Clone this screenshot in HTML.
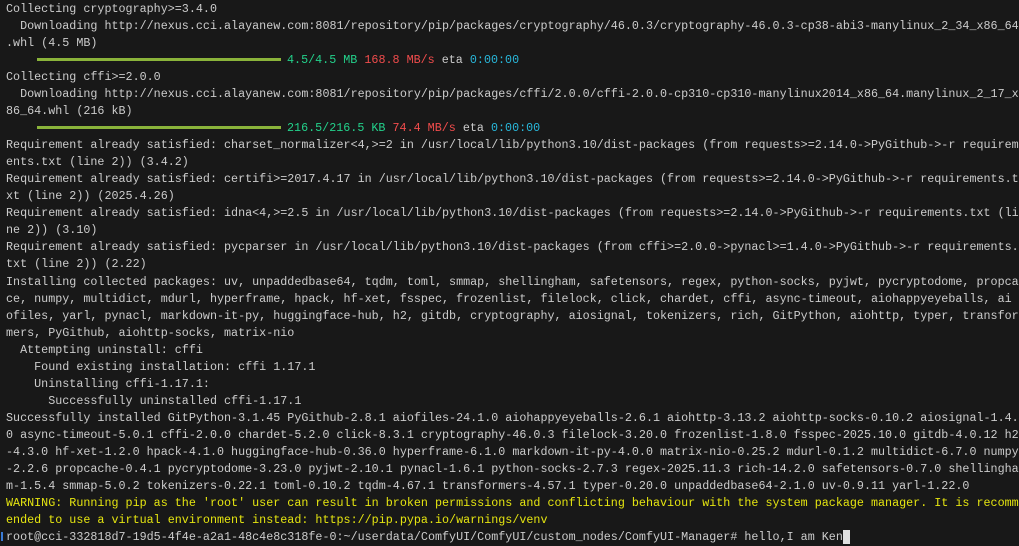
<!DOCTYPE html>
<html><head><meta charset="utf-8"><style>
html,body{margin:0;padding:0;background:#181818;width:1019px;height:546px;overflow:hidden}
#t{position:absolute;left:6px;top:1px;font-family:"Liberation Mono",monospace;font-size:11.72px;line-height:17.03px;color:#cccccc;white-space:pre}
.g{color:#23d18b}.r{color:#f14c4c}.b{color:#29b8db}.y{color:#e5e510}
.bar{display:inline-block;width:244px;height:3px;background:#8ab33a;vertical-align:middle;margin-left:31px;margin-right:6px;position:relative;top:-1px}
.cur{display:inline-block;width:7px;height:14px;background:#e0e0e0;vertical-align:middle}
</style></head><body><div id="t">Collecting cryptography&gt;=3.4.0
  Downloading http://nexus.cci.alayanew.com:8081/repository/pip/packages/cryptography/46.0.3/cryptography-46.0.3-cp38-abi3-manylinux_2_34_x86_64
.whl (4.5 MB)
<span class="bar"></span><span class="g">4.5/4.5 MB</span> <span class="r">168.8 MB/s</span> eta <span class="b">0:00:00</span>
Collecting cffi&gt;=2.0.0
  Downloading http://nexus.cci.alayanew.com:8081/repository/pip/packages/cffi/2.0.0/cffi-2.0.0-cp310-cp310-manylinux2014_x86_64.manylinux_2_17_x
86_64.whl (216 kB)
<span class="bar"></span><span class="g">216.5/216.5 KB</span> <span class="r">74.4 MB/s</span> eta <span class="b">0:00:00</span>
Requirement already satisfied: charset_normalizer&lt;4,&gt;=2 in /usr/local/lib/python3.10/dist-packages (from requests&gt;=2.14.0-&gt;PyGithub-&gt;-r requirem
ents.txt (line 2)) (3.4.2)
Requirement already satisfied: certifi&gt;=2017.4.17 in /usr/local/lib/python3.10/dist-packages (from requests&gt;=2.14.0-&gt;PyGithub-&gt;-r requirements.t
xt (line 2)) (2025.4.26)
Requirement already satisfied: idna&lt;4,&gt;=2.5 in /usr/local/lib/python3.10/dist-packages (from requests&gt;=2.14.0-&gt;PyGithub-&gt;-r requirements.txt (li
ne 2)) (3.10)
Requirement already satisfied: pycparser in /usr/local/lib/python3.10/dist-packages (from cffi&gt;=2.0.0-&gt;pynacl&gt;=1.4.0-&gt;PyGithub-&gt;-r requirements.
txt (line 2)) (2.22)
Installing collected packages: uv, unpaddedbase64, tqdm, toml, smmap, shellingham, safetensors, regex, python-socks, pyjwt, pycryptodome, propca
ce, numpy, multidict, mdurl, hyperframe, hpack, hf-xet, fsspec, frozenlist, filelock, click, chardet, cffi, async-timeout, aiohappyeyeballs, ai
ofiles, yarl, pynacl, markdown-it-py, huggingface-hub, h2, gitdb, cryptography, aiosignal, tokenizers, rich, GitPython, aiohttp, typer, transfor
mers, PyGithub, aiohttp-socks, matrix-nio
  Attempting uninstall: cffi
    Found existing installation: cffi 1.17.1
    Uninstalling cffi-1.17.1:
      Successfully uninstalled cffi-1.17.1
Successfully installed GitPython-3.1.45 PyGithub-2.8.1 aiofiles-24.1.0 aiohappyeyeballs-2.6.1 aiohttp-3.13.2 aiohttp-socks-0.10.2 aiosignal-1.4.
0 async-timeout-5.0.1 cffi-2.0.0 chardet-5.2.0 click-8.3.1 cryptography-46.0.3 filelock-3.20.0 frozenlist-1.8.0 fsspec-2025.10.0 gitdb-4.0.12 h2
-4.3.0 hf-xet-1.2.0 hpack-4.1.0 huggingface-hub-0.36.0 hyperframe-6.1.0 markdown-it-py-4.0.0 matrix-nio-0.25.2 mdurl-0.1.2 multidict-6.7.0 numpy
-2.2.6 propcache-0.4.1 pycryptodome-3.23.0 pyjwt-2.10.1 pynacl-1.6.1 python-socks-2.7.3 regex-2025.11.3 rich-14.2.0 safetensors-0.7.0 shellingha
m-1.5.4 smmap-5.0.2 tokenizers-0.22.1 toml-0.10.2 tqdm-4.67.1 transformers-4.57.1 typer-0.20.0 unpaddedbase64-2.1.0 uv-0.9.11 yarl-1.22.0
<span class="y">WARNING: Running pip as the 'root' user can result in broken permissions and conflicting behaviour with the system package manager. It is recomm
ended to use a virtual environment instead: https://pip.pypa.io/warnings/venv</span>
root@cci-332818d7-19d5-4f4e-a2a1-48c4e8c318fe-0:~/userdata/ComfyUI/ComfyUI/custom_nodes/ComfyUI-Manager# hello,I am Ken<span class="cur"></span></div>
<div style="position:absolute;left:1px;top:532px;width:2px;height:9px;background:#3a7bd5"></div>
</body></html>
